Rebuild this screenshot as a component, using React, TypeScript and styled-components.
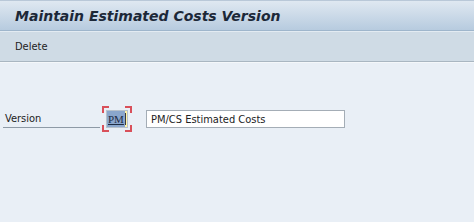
import React from 'react';
import styled, { createGlobalStyle } from 'styled-components';

const GlobalStyle = createGlobalStyle`
  html, body {
    margin: 0;
    padding: 0;
    background: #e9eff6;
  }
  body {
    font-family: Tahoma, "DejaVu Sans", "Liberation Sans", sans-serif;
  }
`;

const Page = styled.div`
  width: 474px;
  height: 222px;
  display: flex;
  flex-direction: column;
  background: #e9eff6;
  overflow: hidden;
`;

const TitleBar = styled.div`
  height: 29px;
  border-top: 1px solid #b9c8d8;
  background: linear-gradient(#dfe8f1, #b7cbdf);
  display: flex;
  align-items: center;
  padding-left: 15px;
  border-bottom: 1px solid #9fb6cc;
`;

const Title = styled.h1`
  margin: 0;
  font-family: "DejaVu Sans", "Liberation Sans", sans-serif;
  font-size: 14px;
  font-weight: bold;
  font-style: italic;
  color: #1c2838;
`;

const Toolbar = styled.div`
  height: 29px;
  background: #cfdbe5;
  border-top: 1px solid #e3ebf2;
  border-bottom: 1px solid #a9b6c1;
  display: flex;
  align-items: center;
  padding-left: 15px;
`;

const ToolButton = styled.span`
  font-family: "DejaVu Sans Condensed", "DejaVu Sans", sans-serif;
  font-size: 11px;
  color: #222;
`;

const Body = styled.div`
  flex: 1;
  padding: 43px 0 0 3px;
  border-top: 1px solid #f4f7fa;
`;

const Row = styled.div`
  display: flex;
  align-items: center;
  height: 26px;
`;

const Label = styled.label`
  width: 97px;
  height: 16px;
  margin-top: 2px;
  box-sizing: border-box;
  padding-left: 2px;
  border-bottom: 1px solid #8e9aa6;
  font-family: "DejaVu Sans Condensed", "DejaVu Sans", sans-serif;
  font-size: 11px;
  color: #222;
  line-height: 14px;
`;

const FocusFrame = styled.div`
  position: relative;
  margin-left: 2px;
  width: 30px;
  height: 26px;
  display: flex;
  align-items: center;
  justify-content: center;
`;

const Corner = styled.span<{ $v: 'top' | 'bottom'; $h: 'left' | 'right' }>`
  position: absolute;
  ${(p) => p.$v}: 0;
  ${(p) => p.$h}: 0;
  width: 5px;
  height: 5px;
  border-${(p) => p.$v}: 2px solid #d9505a;
  border-${(p) => p.$h}: 2px solid #d9505a;
`;

const KeyField = styled.div`
  width: 22px;
  height: 18px;
  display: flex;
  background: #fff3a8;
  border: 1px solid #b8c2cc;
  box-sizing: border-box;
`;

const Selected = styled.span`
  background: #8aa6cc;
  color: #1d2c44;
  font-family: "Liberation Serif", serif;
  font-size: 11px;
  line-height: 16px;
  padding: 0 1px;
  text-decoration: underline;
`;

const Caret = styled.span`
  width: 1px;
  background: #3a3a3a;
  margin: 2px 0;
`;

const TextField = styled.div`
  margin-left: 14px;
  width: 199px;
  height: 18px;
  box-sizing: border-box;
  background: #fff;
  border: 1px solid #a4adb6;
  display: flex;
  align-items: center;
  padding-left: 4px;
  font-family: "DejaVu Sans Condensed", "DejaVu Sans", sans-serif;
  font-size: 11px;
  color: #222;
`;

export default function App() {
  return (
    <Page>
      <GlobalStyle />
      <TitleBar>
        <Title>Maintain Estimated Costs Version</Title>
      </TitleBar>
      <Toolbar>
        <ToolButton>Delete</ToolButton>
      </Toolbar>
      <Body>
        <Row>
          <Label>Version</Label>
          <FocusFrame>
            <Corner $v="top" $h="left" />
            <Corner $v="top" $h="right" />
            <Corner $v="bottom" $h="left" />
            <Corner $v="bottom" $h="right" />
            <KeyField>
              <Selected>PM</Selected>
              <Caret />
            </KeyField>
          </FocusFrame>
          <TextField>PM/CS Estimated Costs</TextField>
        </Row>
      </Body>
    </Page>
  );
}
